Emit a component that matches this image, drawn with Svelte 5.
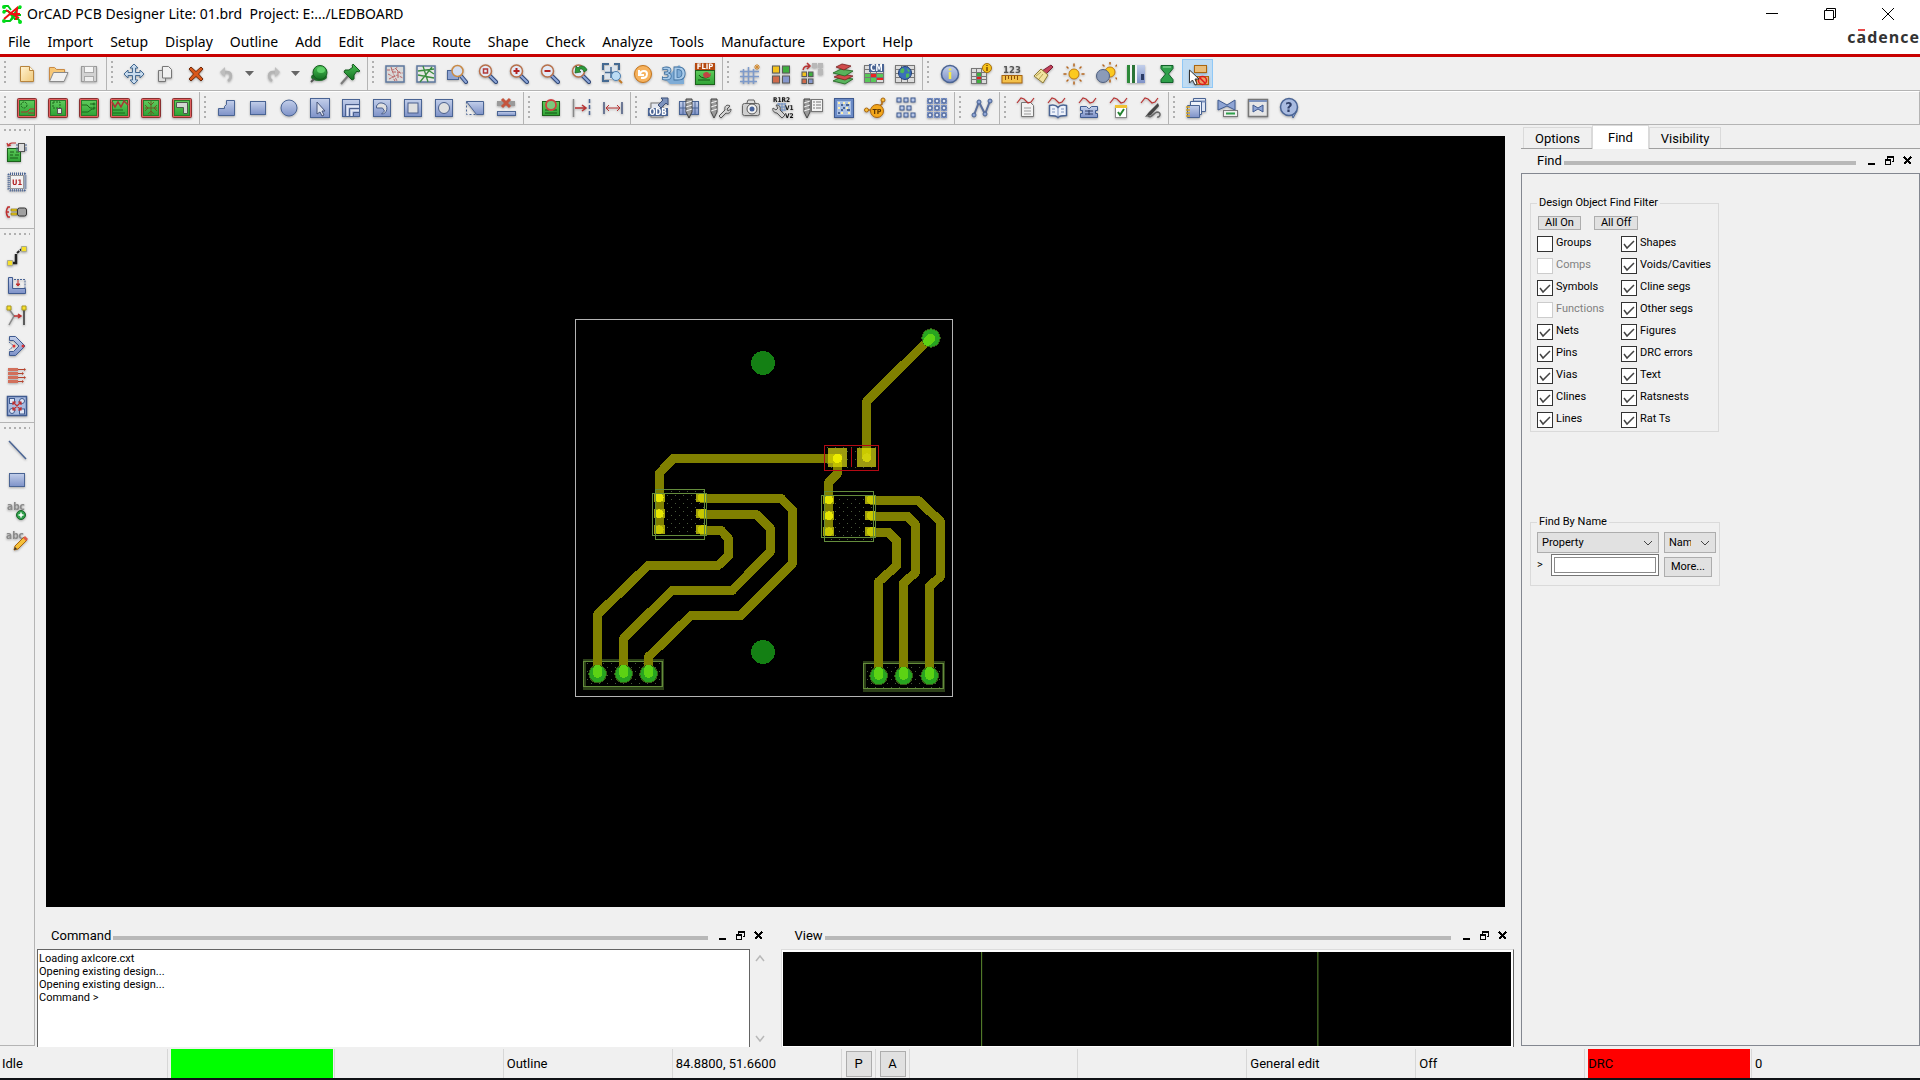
<script>
  const pcb = (inner) =>
    `<rect x="2.500" y="2.500" width="19" height="19" rx="1" fill="#e06060" stroke="#8a3030"/><rect x="4.500" y="4.500" width="15" height="15" fill="url(#gGreen)" stroke="#2a7a2a"/><g fill="none" stroke="#1c661c">${inner}</g>`;
  const blueBox = (inner) =>
    `<rect x="3.500" y="3.500" width="17" height="17" fill="url(#gBlue)" stroke="#4a6494"/><g stroke="#4a5f8c">${inner}</g>`;
  const lens = (inner) =>
    `<path d="M14 14l6 6" stroke="#2f4779" stroke-width="4" stroke-linecap="round"/><path d="M14 14l6 6" stroke="#8fa8d8" stroke-width="2" stroke-linecap="round"/><circle cx="9.500" cy="9" r="6" fill="#e3eaf6" stroke="#b8704a" stroke-width="1.500"/>${inner}`;
  const wave = '<path d="M2 7l4-5 3 1 4 4 3-1 3-4" fill="none" stroke="#b83232" stroke-width="1.200"/>';
  const drill = (x) =>
    `<path d="M${x} 3h6v13l-3 6-3-6z" fill="#9a9a9a" stroke="#444"/><path d="M${x} 7l6-2M${x} 11l6-2M${x} 15l6-2" stroke="#eee"/>`;
  const squares = (list) =>
    list.map(([x, y, c, s = 7]) => `<rect x="${x}" y="${y}" width="${s}" height="${s}" fill="${c}" stroke="#5a5a5a"/>`).join('');
  const rays =
    '<g stroke="#b5651d" stroke-width="1.500" stroke-linecap="round"><path d="M12 2v2M12 20v2M2 12h2M20 12h2M5 5l1 1M18 18l1 1M19 5l-1 1M5 19l1-1"/></g>';
  const table =
    '<rect x="2" y="3" width="20" height="18" fill="#777"/><path d="M3 4h5v3H3zM9 4h5v3H9zM15 4h6v3h-6zM3 8h5v3H3zM9 8h5v3H9zM15 8h6v3h-6zM3 12h5v3H3zM9 12h5v3H9zM15 12h6v3h-6zM3 16h5v4H3zM9 16h5v4H9zM15 16h6v4h-6z" fill="#dcdcdc"/>';

  const art = {
    fresh: '<path d="M5.500 4.500h9l4 4v11h-13z" fill="url(#gCream)" stroke="#b8843c"/><path d="M14.500 4.500v4h4" fill="#fff6dc" stroke="#b8843c"/>',
    open: '<path d="M3.500 18.500v-13h5l2 2h8v3" fill="#f6c777" stroke="#c98a45"/><path d="M3.500 19.500l4-9h14.500l-4 9z" fill="#f0f0f0" stroke="#8a8a8a"/>',
    save: '<rect x="4.500" y="4.500" width="15" height="15" fill="#d2d2d2" stroke="#9a9a9a"/><rect x="7.500" y="4.500" width="9" height="6" fill="#f6f6f6" stroke="#a8a8a8"/><rect x="7.500" y="14.500" width="9" height="5" fill="#eee" stroke="#a8a8a8"/>',
    move: '<path d="M12 2l4 4h-2.500v4.500H18V8l4 4-4 4v-2.500h-4.500V18H16l-4 4-4-4h2.500v-4.500H6V16l-4-4 4-4v2.500h4.500V6H8z" fill="#c9dcee" stroke="#456a92"/>',
    copy: '<path d="M5.500 8.500h7v11h-7z" fill="#ddd" stroke="#777"/><path d="M9.500 4.500h6l3 3v8.500h-9z" fill="#f0f0f0" stroke="#777"/>',
    drop: '<path d="M5 7l2-2 5 4.500L17 5l2 2-4.500 5 4.500 5-2 2-5-4.500L7 19l-2-2 4.500-5z" fill="#d8571a" stroke="#6e2806"/>',
    undo: '<path d="M7 10h5c5 0 5 6 1 9" fill="none" stroke="#b4b4b4" stroke-width="2.500"/><path d="M10 5v10l-5-5z" fill="#bebebe"/>',
    redo: '<path d="M17 10h-5c-5 0-5 6-1 9" fill="none" stroke="#b4b4b4" stroke-width="2.500"/><path d="M14 5v10l5-5z" fill="#bebebe"/>',
    ball: '<ellipse cx="12" cy="15" rx="8" ry="4" fill="#1f6b2a"/><circle cx="13" cy="10.500" r="7" fill="url(#gPin)" stroke="#145c1d"/><ellipse cx="14" cy="8" rx="4" ry="3" fill="#5fd069"/><path d="M4 20l3-3" stroke="#555" stroke-width="2"/>',
    pin: '<path d="M3 22l7-8" stroke="#7b7b7b" stroke-width="2"/><path d="M15 2l7 7-2 1-1-1-3 4 0 4-2 1-8-8 1-2h4l4-3-1-1z" fill="url(#gPin)" stroke="#145c1d"/>',
    ratsOn: '<rect x="3" y="4" width="18" height="16" fill="#d9d9d9" stroke="#5d789f" stroke-width="1.500"/><path d="M4 8h6l5-3M5 12l4 2 3 5M8 5l2 6 4 8M13 7l4 4h3M6 17l8-4 6 3M15 10v6M10 10h7" stroke="#b96565" fill="none" stroke-dasharray="3 1"/>',
    ratsOff: '<rect x="3" y="4" width="18" height="16" fill="#e6e6e6" stroke="#5d789f" stroke-width="1.500"/><path d="M4 9l16-2M4 13l16 3M9 4l5 16M18 5L6 20M14 8l6 4" stroke="#3a8c3f" stroke-width="1.300" fill="none"/>',
    zoomFit: '<rect x="2.500" y="8.500" width="11" height="9" fill="#8ea4d4" stroke="#4a6494"/><path d="M16 14l5 6" stroke="#2f4779" stroke-width="4" stroke-linecap="round"/><path d="M16 14l5 6" stroke="#8fa8d8" stroke-width="2" stroke-linecap="round"/><circle cx="12.500" cy="9" r="5.500" fill="#d4dff2" stroke="#c98a45" stroke-width="1.500"/>',
    zoomBox: lens('<path d="M7.500 7h4v4h-4z" fill="none" stroke="#b23a3a" stroke-width="1.500"/>'),
    zoomIn: lens('<path d="M9.500 6v6M6.500 9h6" stroke="#b22222" stroke-width="2"/>'),
    zoomOut: lens('<path d="M6.500 9h6" stroke="#b22222" stroke-width="2"/>'),
    zoomBack: lens('<path d="M18 8C16 3 11 3 9 6L7 4 6 11l6-1-2-2c2-2 4-1 5 2z" fill="#2c9a39" stroke="#145c1d" stroke-width=".700"/>'),
    center: '<path d="M3 8V2h6M14 2h5v6M3 13v6h6" fill="none" stroke="#456a92" stroke-width="2"/><rect x="5" y="4" width="12" height="13" fill="#dce4ec"/><path d="M11 5v11M5 10.500h12" stroke="#456a92" stroke-width="1.500"/><circle cx="16" cy="14" r="4.500" fill="#bcdcf4" stroke="#4d7fb0"/><path d="M19 18l3 3" stroke="#c27a28" stroke-width="2"/>',
    refresh: '<circle cx="12" cy="12" r="8.500" fill="#f6b25e" stroke="#c4741b"/><path d="M8 8v5h5M9 12c1-4 7-4 7 0s-3 4-6 4" fill="none" stroke="#fff" stroke-width="2"/>',
    threeD: '<path d="M17 3l5 5v14H8l-5-5z" fill="#7facd6"/><text x="11.500" y="18" text-anchor="middle" font-size="18" class="ic-bold" fill="#a9cbea" stroke="#3d6f9f" stroke-width=".800">3D</text>',
    flip: '<rect x="2" y="1" width="20" height="7" fill="#b5490f"/><text x="12" y="7.300" text-anchor="middle" font-size="7.500" class="ic-bold" fill="#fff">FLIP</text><rect x="2.500" y="8.500" width="19" height="14" fill="url(#gGreen)" stroke="#1c611c"/><path d="M6 13c2 4 10 4 11 0M5 18h12" stroke="#145214" fill="none"/><path d="M10 12c3-3 6-2 6 0l2-1-1 4-4 1c-2 0-3-2-3-4z" fill="#c24343"/>',
    grid: '<path d="M5.500 7v15M10.500 5v17M15.500 7v15M2 9.500h19M2 14.500h19M2 19.500h17" stroke="#7d9aca" stroke-width="1.500"/><path d="M19 2v6M16 5h6M17 3l4 4M21 3l-4 4" stroke="#d68a2c"/>',
    colors: squares([[3.5, 4, '#f2c21c'], [13.5, 4, '#3fae3f'], [3.5, 14, '#cf6a4a'], [13.5, 14, '#8597cc']]),
    swap: '<path d="M12 1h5v5h-5zM18 1h5v5h-5zM18 7h5v6h-5z" fill="#b8b8b8"/>' + squares([[2, 10, '#f2c21c', 4.5], [8.5, 10, '#3fae3f', 4.5], [2, 17, '#cf6a4a', 4.5], [8.5, 17, '#8597cc', 4.5]]) + '<path d="M3 8c1-4 3-4 6-4M7 1l3 3-3 3" fill="none" stroke="#b83232" stroke-width="1.500"/>',
    layers: '<g stroke-width=".800"><path d="M2 19l8-4 12 2-8 5z" fill="#58b35c" stroke="#1c611c"/><path d="M3 15l7-3 12 2-8 4z" fill="#cf4c4c" stroke="#7a2020"/><path d="M2 11l8-4 12 2-8 5z" fill="#58b35c" stroke="#1c611c"/><path d="M5 5l6-3 9 2-7 4z" fill="#cf4c4c" stroke="#7a2020"/></g>',
    cm: table + '<path d="M3 12h5v3H3zM3 16h5v4H3zM15 12h6v3h-6zM9 16h5v4H9z" fill="#58c858"/><path d="M9 12h5v3H9zM15 16h6v2h-6z" fill="#e22"/><rect x="7" y="2" width="15" height="8" fill="#4a6494"/><text x="14.500" y="9" text-anchor="middle" font-size="8" class="ic-bold" fill="#fff">CM</text>',
    globe: table + '<circle cx="12" cy="11" r="6.500" fill="#3b6fb8" stroke="#1f3f77"/><path d="M8 7c3-2 4 1 3 3s-3 1-4 0zM13 12c3-2 4 0 3 3l-3 1zM14 6l3 3-2 1z" fill="#4fb95a"/>',
    info: '<circle cx="12" cy="12" r="8.500" fill="url(#gBlue)" stroke="#4a6494" stroke-width="1.500"/><path d="M12 10v7M12 6.500v2" stroke="#f5ea4a" stroke-width="2.500"/>',
    tableInfo: '<path d="M2 6h16v16H2z" fill="#777"/><path d="M3 7h4v3H3zM8 7h4v3H8zM13 7h4v3h-4zM3 11h4v3H3zM13 11h4v3h-4zM3 15h4v2H3zM13 15h4v2h-4zM3 18h4v3H3zM13 18h4v3h-4z" fill="#dcdcdc"/><path d="M8 11h4v3H8zM8 18h4v3H8z" fill="#3fae3f"/><path d="M8 15h4v2H8z" fill="#d22"/><circle cx="18" cy="6" r="4.500" fill="#f6c21a" stroke="#a9700a"/><path d="M18 5v4M18 3v1" stroke="#7a4a00" stroke-width="1.500"/>',
    ruler: '<text x="12" y="10.500" text-anchor="middle" font-size="9.500" class="ic-bold" fill="#555">123</text><rect x="2" y="13.500" width="20" height="7.500" fill="#f3c14b" stroke="#a9650f"/><path d="M5.500 14v4M8.500 14v3M11.500 14v4M14.500 14v3M17.500 14v4" stroke="#8a4d0a"/>',
    brush: '<path d="M20 3l2 2-7 7-4-3z" fill="#c2405a" stroke="#7b1f34"/><path d="M10 7l7 6-5 8-9-7z" fill="#f1e3a0" stroke="#8d7a34"/><path d="M5 14l5-4M8 17l4-5" stroke="#b7a252"/>',
    sun: rays + '<circle cx="12" cy="12" r="5" fill="#fbc91f" stroke="#c07a10"/>',
    shade: '<g transform="translate(5 -2)">' + rays + '<circle cx="12" cy="12" r="5" fill="#fbc91f" stroke="#c07a10"/></g><circle cx="10" cy="14" r="6.500" fill="#8b9bb8" stroke="#4f5f80"/>',
    bars: '<rect x="3" y="3" width="18" height="18" fill="url(#gBlue)"/><path d="M3 3h3v18H3z" fill="#2e8a3a"/><path d="M6 3h2v18H6zM11 3h2v18h-2z" fill="#f4f4f4"/><path d="M8 3h3v18H8z" fill="#2b7437"/><path d="M17 12h3v6h-3z" fill="#2d3d66"/>',
    hourglass: '<path d="M6 3.500h12v3l-4.500 5.500 4.500 5.500v3H6v-3l4.500-5.500L6 6.500z" fill="#2ea04a" stroke="#12602a"/><path d="M8 5h8" stroke="#9ce0a8"/>',
    pick: '<rect x="8.500" y="3.500" width="12" height="7" fill="#e8bd7b" stroke="#a9650f"/><rect x="10.500" y="14.500" width="12" height="8" fill="#e8a06a" stroke="#a9650f"/><circle cx="16.500" cy="18.500" r="4" fill="none" stroke="#e01818" stroke-width="1.500"/><path d="M14 16l5 5" stroke="#e01818" stroke-width="1.500"/><path d="M3.500 8v13l3-3 2.500 5 2-1-2-5h4z" fill="#fff" stroke="#333"/>',

    p1: pcb('<circle cx="9" cy="9" r="3" stroke-dasharray="2 1"/><path d="M6 16h6l3-3h4" stroke="#a33"/><path d="M13 17h6" stroke="#a33"/>'),
    p2: pcb('<rect x="7" y="6" width="7" height="6" stroke-dasharray="2 1"/><rect x="11.500" y="12.500" width="4" height="5" fill="#e6e6e6" stroke="#555"/>'),
    p3: pcb('<path d="M5 9h5l3 3h2M5 16h6l4-3h2M13 8h4"/><circle cx="17" cy="8" r="1"/><circle cx="17" cy="12" r="1"/>'),
    p4: pcb('<path d="M4 6l3 5 3-5 3 5 3-6 4 4" stroke="#a33" stroke-width="1.500"/><path d="M5 14h10M5 17h12"/>'),
    p5: pcb('<path d="M12 5v14M6 12h12M9 6l3 3 3-3M9 18l3-3 3 3M6 9l3 3-3 3M18 9l-3 3 3 3" stroke="#6b5a24"/>'),
    p6: pcb('<path d="M6.500 6.500h11v11h-4v-6h-7z" fill="#d2d8d2" stroke="#4c5c4c"/>'),
    polyS: '<path d="M3.500 19.500v-7h6v-2l2-2v-4h8v15z" fill="url(#gBlue)" stroke="#4a6494"/>',
    rectS: '<rect x="4.500" y="5.500" width="15" height="13" fill="url(#gBlue)" stroke="#4a6494"/>',
    circS: '<circle cx="12" cy="12" r="8" fill="url(#gBlue)" stroke="#4a6494"/>',
    selS: '<rect x="2.500" y="2.500" width="19" height="19" fill="url(#gBlue)" stroke="#4a6494"/><path d="M9 6v12l3-2 2 4 2-1-2-4h3z" fill="#dfe4ee" stroke="#46557a"/>',
    editS: blueBox('<path d="M8.500 20v-9.500H20M12.500 20v-5.500H20" fill="none" stroke="#e3e8f2" stroke-width="2"/><path d="M6.500 20V8.500H20M10.500 20v-7.500H20M14.500 20v-3.500H20" fill="none"/>'),
    voidP: blueBox('<path d="M6.500 10a5.500 5.500 0 1 1 5 8l3-3-2-3h-6z" fill="#e0e0e0"/>'),
    voidR: blueBox('<rect x="7" y="7" width="10" height="10" fill="#e0e0e0"/>'),
    voidC: blueBox('<circle cx="12" cy="12" r="5.500" fill="#e0e0e0"/>'),
    mergeS: '<path d="M3.500 5.500h17v13h-7z" fill="url(#gBlue)" stroke="#4a6494"/><path d="M3.500 5.500v13h12" fill="none" stroke="#4a6494" stroke-dasharray="2 2"/>',
    killS: '<rect x="3" y="5" width="18" height="5" fill="#9a9a9a"/><rect x="3.500" y="15.500" width="18" height="4" fill="url(#gBlue)" stroke="#4a6494"/><path d="M8 3l8 8M16 3l-8 8" stroke="#c4543c" stroke-width="3"/>',
    board: '<rect x="3.500" y="5.500" width="17" height="14" fill="url(#gGreen)" stroke="#1c611c"/><path d="M6 17h12M6 14h4M14 14h4" stroke="#145214"/><circle cx="12" cy="9" r="5" fill="#7cc87c" stroke="#d04040" stroke-width="1.800"/>',
    dimA: '<path d="M3.500 3v18" stroke="#888" stroke-width="1.500"/><path d="M19.500 3v18" stroke="#4a6494" stroke-width="1.500" stroke-dasharray="4 2"/><path d="M5 12h10M12 9l4 3-4 3" stroke="#b83232" stroke-width="1.500" fill="none"/>',
    dimB: '<path d="M3 6v12M21 6v12" stroke="#4a5a80" stroke-width="1.500"/><path d="M5 12h14M8 9l-3 3 3 3M16 9l3 3-3 3" stroke="#b83232" fill="none"/>',
    odb: '<rect x="5" y="7" width="12" height="14" fill="#e4e8f0" stroke="#777"/><path d="M12 9l5-5-2-2h7v7l-2-2-5 5z" fill="#7c92bd" stroke="#3f527a"/><rect x="2" y="12" width="20" height="8" fill="#4a6494"/><text x="12" y="18.800" text-anchor="middle" font-size="8" class="ic-bold" fill="#fff">ODB</text>',
    drillT: '<rect x="2.500" y="5.500" width="19" height="13" fill="url(#gBlue)" stroke="#4a6494"/><path d="M6 5v14M18 5v14M2 12h20" stroke="#4a6494"/>' + drill(9),
    drillW: drill(3) + '<path d="M11 20l6-6c-1-4 2-6 5-4l-3 3 1 2 3-2c0 4-3 5-5 4l-5 5z" fill="#d2d2d2" stroke="#555"/>',
    camera: '<rect x="3.500" y="7.500" width="17" height="12" rx="2" fill="#cfcfcf" stroke="#666"/><path d="M8 7l1-3h6l1 3" fill="#ddd" stroke="#666"/><circle cx="13" cy="13" r="5" fill="#f1f1f1" stroke="#555"/><circle cx="13" cy="13" r="2.500" fill="#48639c"/>',
    refdes: '<text x="3" y="6" font-size="6.500" class="ic-bold" fill="#111">R1R2</text><path d="M7 8h9M7 11h8M7 14h8M9 7v10M12 7v10M15 7v8" stroke="#6d8fc4"/><path d="M12 22l-5-5c-3 0-5-3-4-5l3 2 2-2-2-3c3 0 5 2 4 5l5 5z" fill="#d2d2d2" stroke="#555"/><text x="15" y="14" font-size="6.500" class="ic-bold" fill="#111">V1</text><text x="15" y="22" font-size="6.500" class="ic-bold" fill="#111">V2</text>',
    drillL: drill(3) + '<rect x="10.500" y="3.500" width="11" height="12" fill="#f2f2f2" stroke="#777"/><path d="M12 6h2M15 6h5M12 9h2M15 9h5M12 12h2M15 12h5" stroke="#777"/>',
    chip: '<rect x="2.500" y="2.500" width="19" height="19" fill="#6a8ac6" stroke="#3f5a90"/><rect x="5" y="5" width="14" height="14" fill="#a9bfe4"/><path d="M6 7h2M11 7h2M16 7h2M6 12h2M14 12h2M9 17h2M16 17h2" stroke="#fff0b0" stroke-width="2"/><path d="M9 9h2M14 9h3M9 14h2M15 14h3M6 17h2M11 12h2" stroke="#4a6494" stroke-width="2"/>',
    testpt: '<path d="M3 14h8l8-6V4" stroke="#b06a10" stroke-width="1.500" fill="none"/><circle cx="3.500" cy="14" r="2" fill="#f8bf3c" stroke="#a9650f"/><circle cx="20" cy="4" r="2" fill="#f8bf3c" stroke="#a9650f"/><circle cx="14" cy="15" r="6.500" fill="#f3a71c" stroke="#a9650f"/><text x="14" y="17.500" text-anchor="middle" font-size="7" class="ic-bold" fill="#5b3500">TP</text>',
    pinsA: squares([[3, 2, '#b9c8e8', 4], [10, 2, '#b9c8e8', 4], [17, 2, '#b9c8e8', 4], [6, 10, '#b9c8e8', 4], [13, 10, '#b9c8e8', 4], [3, 17, '#b9c8e8', 4], [10, 17, '#b9c8e8', 4], [17, 17, '#b9c8e8', 4]]).replaceAll('#5a5a5a', '#3f5a90'),
    pinsB: [5, 12, 19].flatMap((x) => [5, 12, 19].map((y) => `<rect x="${x - 3}" y="${y - 3}" width="6" height="6" fill="#7d94c6"/><circle cx="${x}" cy="${y}" r="2" fill="#dfe6f5" stroke="#3f5a90"/>`)).join(''),
    netN: '<path d="M4 19L9 6l6 12 5-13" fill="none" stroke="#5b6f9c" stroke-width="2"/><g fill="#8ea4d4" stroke="#4a6494"><circle cx="4" cy="19" r="2"/><circle cx="9" cy="6" r="2"/><circle cx="15" cy="18" r="2"/><circle cx="20" cy="5" r="2"/></g>',
    wDoc: '<path d="M6.500 6.500h9l3 3v11h-12z" fill="#f2f2f2" stroke="#777"/><path d="M9 12h7M9 15h7M9 18h7" stroke="#999"/>' + wave,
    wBook: '<path d="M3.500 9.500c4-1 7 0 8.500 2 1.500-2 4.500-3 8.500-2v10c-4 0-7 0-8.500 2-1.500-2-4.500-2-8.500-2z" fill="#eef2fa" stroke="#4a6494" stroke-width="1.500"/><path d="M12 12v9M6 13h3M6 16h3M15 13h3M15 16h3" stroke="#7c92bd"/>' + wave,
    wBox: '<path d="M3.500 10.500h6l2 2h1l2-2h6v4h-2v3h2v4h-17v-4h2v-3h-2z" fill="url(#gBlue)" stroke="#3f5a90"/><path d="M8 15h8M8 18h8M12 14v5" stroke="#2d3d66"/>' + wave,
    wCheck: '<rect x="7.500" y="9.500" width="11" height="12" fill="#fff" stroke="#888"/><path d="M7 9h12v3H7z" fill="#f1c232"/><path d="M10 16l2 3 4-6" stroke="#23832f" stroke-width="2" fill="none"/>' + wave,
    wProbe: wave + '<path d="M19 7l-9 9-4 5 6-2 8-9z" fill="#444"/><path d="M8 19c4 5 6-2 10-3 5 0 3 6 0 5" fill="none" stroke="#666" stroke-width="1.500"/>',
    books: '<path d="M9.500 2.500h12v13h-12z" fill="#dde5f4" stroke="#4a6494"/><path d="M9.500 5.500h12" stroke="#7c92bd" stroke-width="2"/><path d="M6.500 5.500h11v13h-11z" fill="#eef2fa" stroke="#4a6494"/><path d="M3.500 9.500h12v12h-12z" fill="url(#gBlue)" stroke="#4a6494"/><path d="M2 11h4M2 14h4M2 17h4M2 20h4" stroke="#d9a520" stroke-width="1.500"/>',
    bow: '<path d="M3 4l9 5 8-5v10l-8-4-9 4z" fill="#8ea4d4" stroke="#3f5a90"/><rect x="8.500" y="14.500" width="14" height="6" fill="#eee" stroke="#777"/><path d="M11 17.500h9" stroke="#2ea04a" stroke-width="2"/>',
    win: '<rect x="2.500" y="3.500" width="19" height="17" fill="#e6e6e6" stroke="#777" stroke-width="1.500"/><path d="M3 5h18" stroke="#7c92bd" stroke-width="2"/><path d="M7 9l5 3 5-3v7l-5-3-5 3z" fill="#8ea4d4" stroke="#3f5a90"/>',
    help: '<path d="M20 15l-4 7-1-4z" fill="#8ea4d4" stroke="#4a6494"/><circle cx="12" cy="11" r="8.500" fill="#a9bbe0" stroke="#4a6494" stroke-width="1.500"/><text x="12" y="16" text-anchor="middle" font-size="14" class="ic-bold" fill="#2d3d66">?</text>',

    place: '<rect x="2.500" y="8.500" width="13" height="13" fill="url(#gGreen)" stroke="#1c611c"/><path d="M5 12h4M11 12h3M5 15h3M10 15h4M5 18h8" stroke="#1a5c1a"/><rect x="13.500" y="3.500" width="6" height="8" fill="#ddd" stroke="#555"/><path d="M11 5h2M11 8h2M11 10h2M20 5h2M20 8h2M20 10h2" stroke="#4a6494"/><path d="M11 3H7C5 3 4 4 3 6M2 3l1 3 3-1" stroke="#c03030" stroke-width="1.200" fill="none"/>',
    unit: '<rect x="4" y="4" width="16" height="16" rx="1" fill="#e8e8e8" stroke="#4a6494" stroke-width="3" stroke-dasharray="1 1"/><rect x="5.500" y="5.500" width="13" height="13" fill="#f2f2f2" stroke="#999"/><text x="12" y="15" text-anchor="middle" font-size="7.500" class="ic-bold" fill="#b22222">U1</text>',
    plug: '<path d="M5 7H3c-2 3-2 7 0 10h2M2 12h2" stroke="#c03030" stroke-width="1.500" fill="none"/><path d="M6 9h6v2H6zM6 13h6v2H6z" fill="#f1d21c" stroke="#8a7410" stroke-width=".700"/><rect x="12.500" y="8" width="9" height="8" rx="2" fill="#a0a0a0" stroke="#333"/>',
    route: '<path d="M6 19h5v-9" fill="none" stroke="#222" stroke-width="2.500"/><path d="M12 9l6-5" stroke="#222" stroke-width="2" stroke-dasharray="3 1"/><path d="M2.500 16.500h5v5h-5zM16.500 2.500h5v5h-5z" fill="#f6df2a" stroke="#a9a98a"/>',
    slide: '<path d="M3.500 3.500h4v11h13v5h-17z" fill="url(#gBlue)" stroke="#3f5a90"/><path d="M9 5.500h11V14" fill="none" stroke="#4a6494" stroke-dasharray="2 1"/><path d="M13 6v4M11 10h4l-2 2z" fill="#c03030" stroke="#c03030"/>',
    vertex: '<path d="M4 5l5 7-5 9" fill="none" stroke="#888" stroke-width="1.500"/><path d="M19 4v17" stroke="#333" stroke-width="1.500"/><path d="M2 2h4v4H2zM17 2h4v4h-4z" fill="#f6df2a" stroke="#a99820"/><path d="M9 12h7M13 10l3 2-3 2" stroke="#c03030" stroke-width="1.500" fill="none"/>',
    fanout: '<path d="M4.500 2.500h6l9.500 9.500-9.500 9.500h-6v-4h4l5.500-5.500-5.500-5.500h-4z" fill="url(#gBlue)" stroke="#3f5a90"/><path d="M4 8l5 4-5 4" fill="none" stroke="#4a6494" stroke-dasharray="2 1"/><circle cx="9" cy="12" r="1.500" fill="#d33"/><circle cx="18" cy="12" r="1.500" fill="#d33"/>',
    bus: '<path d="M3 4h10v3H3zM3 8h10v3H3zM3 12h10v3H3zM3 16h10v3H3z" fill="#d2705c"/><path d="M13 5.500h7M13 9.500h5M13 13.500h7M13 17.500h5" stroke="#b5432d"/><path d="M19 4v3l2-1.500zM17 8v3l2-1.500zM19 12v3l2-1.500zM17 16v3l2-1.500z" fill="#b5432d"/>',
    spread: '<rect x="2.500" y="2.500" width="19" height="19" fill="#a9bbe0" stroke="#3f5a90" stroke-width="1.500"/><g fill="#dfe6f5" stroke="#3f5a90"><circle cx="17" cy="7" r="2.500"/><rect x="4.500" y="4.500" width="5" height="5"/><rect x="14.500" y="15" width="5" height="5"/><circle cx="7" cy="17" r="2.500"/></g><path d="M8 8l8 8M16 8l-8 8M8 11V8h3M13 8h3v3M8 13v3h3M13 16h3v-3" stroke="#c03030" stroke-width="1.200" fill="none"/>',
    line: '<path d="M4 3l17 18" stroke="#4a6494" stroke-width="1.500"/>',
    text: '<text x="11" y="12" text-anchor="middle" font-size="10" class="ic-bold" fill="#8a8a8a">abc</text><circle cx="16" cy="17" r="4.500" fill="#2ea04a" stroke="#176327"/><path d="M16 14.500v5M13.500 17h5" stroke="#fff" stroke-width="1.500"/>',
    textEdit: '<text x="10" y="11" text-anchor="middle" font-size="10" class="ic-bold" fill="#8a8a8a">abc</text><path d="M9 22l1-4 9-9 3 3-9 9z" fill="#f5c038" stroke="#a9650f"/><path d="M9 22l1-3 2 2z" fill="#333"/><path d="M18 10l2-2 3 3-2 2z" fill="#e05a4a"/>'
  };

  const row1 = [
    [['fresh', 'New'], ['open', 'Open'], ['save', 'Save']],
    [['move', 'Move'], ['copy', 'Copy'], ['drop', 'Delete'], ['undo', 'Undo'], ['caret', 'Undo list'], ['redo', 'Redo'], ['caret', 'Redo list'], ['ball', 'Fix'], ['pin', 'Unfix']],
    [['ratsOn', 'Unrats all'], ['ratsOff', 'Rats all'], ['zoomFit', 'Zoom fit'], ['zoomBox', 'Zoom by points'], ['zoomIn', 'Zoom in'], ['zoomOut', 'Zoom out'], ['zoomBack', 'Zoom previous'], ['center', 'Zoom selection'], ['refresh', 'Redraw'], ['threeD', '3D view'], ['flip', 'Flip board']],
    [['grid', 'Grid toggle'], ['colors', 'Colors'], ['swap', 'Swap colors'], ['layers', 'Cross section'], ['cm', 'Constraint manager'], ['globe', 'Global constraints']],
    [['info', 'Show element'], ['tableInfo', 'Show properties'], ['ruler', 'Measure'], ['brush', 'Highlight'], ['sun', 'Shadow off'], ['shade', 'Shadow on'], ['bars', 'Reports'], ['hourglass', 'Waive DRC'], ['pick', 'Selection filter']]
  ];
  const row2 = [
    [['p1', 'Etch edit'], ['p2', 'Placement edit'], ['p3', 'Route edit'], ['p4', 'Signal integrity'], ['p5', 'General mode'], ['p6', 'Shape mode']],
    [['polyS', 'Add polygon'], ['rectS', 'Add rectangle'], ['circS', 'Add circle'], ['selS', 'Select shape'], ['editS', 'Edit boundary'], ['voidP', 'Void polygon'], ['voidR', 'Void rectangle'], ['voidC', 'Void circle'], ['mergeS', 'Merge shapes'], ['killS', 'Delete islands']],
    [['board', 'Board view'], ['dimA', 'Align spacing'], ['dimB', 'Dimension']],
    [['odb', 'Export ODB'], ['drillT', 'Drill table'], ['drillW', 'Drill setup'], ['camera', 'Artwork'], ['refdes', 'Rename refdes'], ['drillL', 'Drill legend'], ['chip', 'Thieving'], ['testpt', 'Test points'], ['pinsA', 'Pin array'], ['pinsB', 'Ball array']],
    [['netN', 'Net topology']],
    [['wDoc', 'Signal report'], ['wBook', 'Signal library'], ['wBox', 'Signal model'], ['wCheck', 'Signal audit'], ['wProbe', 'Signal probe']],
    [['books', 'Libraries'], ['bow', 'Run progress'], ['win', 'New window'], ['help', 'Help']]
  ];
  const dock = [
    [['place', 'Place manually'], ['unit', 'Place part'], ['plug', 'Connect']],
    [['route', 'Add connect'], ['slide', 'Slide'], ['vertex', 'Custom smooth'], ['fanout', 'Vertex'], ['bus', 'Bus route'], ['spread', 'Spread']],
    [['line', 'Add line'], ['rectS', 'Add rectangle'], ['text', 'Add text'], ['textEdit', 'Edit text']]
  ];

  const menus = ['File', 'Import', 'Setup', 'Display', 'Outline', 'Add', 'Edit', 'Place', 'Route', 'Shape', 'Check', 'Analyze', 'Tools', 'Manufacture', 'Export', 'Help'];

  const filters = [
    ['Groups', ''], ['Shapes', 'on'], ['Comps', 'off'], ['Voids/Cavities', 'on'], ['Symbols', 'on'], ['Cline segs', 'on'],
    ['Functions', 'off'], ['Other segs', 'on'], ['Nets', 'on'], ['Figures', 'on'], ['Pins', 'on'], ['DRC errors', 'on'],
    ['Vias', 'on'], ['Text', 'on'], ['Clines', 'on'], ['Ratsnests', 'on'], ['Lines', 'on'], ['Rat Ts', 'on']
  ];

  const traces = [
    'M268 660V490L309 446H802', 'M802 446V491L776 517V660', 'M890 440V274L1082 84',
    'M396 565H633L667 600V760L513 916H364L236 1040V1085', 'M396 613H558L601 655V725L487 841H307L161 985V1085',
    'M396 661H453L475 685V738L445 766H235L83 913V1085', 'M905 571H1044L1111 634V800L1079 828V1090',
    'M905 619H1012L1036 643V788L1000 820V1090', 'M905 667H955L979 690V768L925 816V1090'
  ];
  const chips = [{ x: 268, r: 396, y: 563 }, { x: 776, r: 903, y: 569 }];
  const headers = [{ x: 40, y: 1046, w: 240, pins: [83, 161, 236] }, { x: 880, y: 1052, w: 243, pins: [926, 1001, 1079] }];
</script>

{#snippet tools(groups)}
  {#each groups as group}
    <div class="group" role="group">
      {#each group as [name, label]}
        {#if name === 'caret'}
          <button class="tool caret" aria-label={label}><svg viewBox="0 0 9 5"><path d="M0 0h9L4.500 5z" fill="#666" /></svg></button>
        {:else}
          <button class="tool" class:active={name === 'pick'} aria-label={label}>
            <svg class="icon" viewBox="0 0 24 24">{@html art[name]}</svg>
          </button>
        {/if}
      {/each}
    </div>
  {/each}
{/snippet}

{#snippet paneHead(title)}
  <header class="pane-head">
    <h2>{title}</h2>
    <span class="rail"></span>
    <button aria-label="Minimize {title}"><svg viewBox="0 0 9 9"><path d="M1 7h7v2H1z" /></svg></button>
    <button aria-label="Float {title}"><svg viewBox="0 0 9 9"><path d="M2 0h7v6H7V5h1V2H3v1H2zM0 3h6v6H0zM1 5v3h4V5z" fill-rule="evenodd" /></svg></button>
    <button aria-label="Close {title}"><svg viewBox="0 0 9 9"><path d="M1 1l7 7M8 1L1 8" fill="none" stroke="#000" stroke-width="1.500" /></svg></button>
  </header>
{/snippet}

<svg class="defs" aria-hidden="true">
  <defs>
    <linearGradient id="gBlue" x1="0" y1="0" x2="0" y2="1"><stop offset="0" stop-color="#c3cfea" /><stop offset="1" stop-color="#7e92c8" /></linearGradient>
    <linearGradient id="gGreen" x1="0" y1="0" x2="0" y2="1"><stop offset="0" stop-color="#5fcb5c" /><stop offset="1" stop-color="#2fa335" /></linearGradient>
    <linearGradient id="gCream" x1="0" y1="0" x2="1" y2="1"><stop offset="0" stop-color="#fff3d2" /><stop offset="1" stop-color="#f0c878" /></linearGradient>
    <linearGradient id="gPin" x1="0" y1="0" x2="0" y2="1"><stop offset="0" stop-color="#4cc257" /><stop offset="1" stop-color="#147022" /></linearGradient>
  </defs>
</svg>

<div class="app">
  <div class="top">
    <div class="titlebar">
      <svg class="logo" viewBox="0 0 20 20">
        <path d="M2 2h4l3 4M1 7h5l4 5h5M2 17h6l6-6h5M8 17l8-13h3M12 15h4l3 3" fill="none" stroke="#00c814" stroke-width="1.800" />
        <g fill="#00e01a"><circle cx="2" cy="3" r="2" /><circle cx="2" cy="8" r="1.800" /><circle cx="2" cy="17" r="2" /><circle cx="18" cy="3" r="1.800" /><circle cx="18" cy="18" r="2" /></g>
        <path d="M2 15L15 4l-1 12M4 6l13 8M8 10h10" fill="none" stroke="#f01010" stroke-width="2" />
      </svg>
      <h1>OrCAD PCB Designer Lite: 01.brd&nbsp; Project: E:.../LEDBOARD</h1>
      <div class="winctl">
        <button aria-label="Minimize"><svg viewBox="0 0 14 14"><path d="M1 6.500h12" /></svg></button>
        <button aria-label="Restore"><svg viewBox="0 0 14 14"><path d="M1.500 3.500h9v9h-9zM3.500 3.500v-2h9v9h-2" /></svg></button>
        <button aria-label="Close"><svg viewBox="0 0 14 14"><path d="M1 1l12 12M13 1L1 13" /></svg></button>
      </div>
    </div>
    <div class="menurow">
      <nav class="menus">
        {#each menus as menu}<button>{menu}</button>{/each}
      </nav>
      <span class="brand">c<span class="macron">a</span>dence</span>
    </div>
  </div>

  <div class="toolbar">{@render tools(row1)}</div>
  <div class="toolbar second">{@render tools(row2)}</div>

  <div class="work">
    <div class="dock">{@render tools(dock)}</div>

    <main>
      <div class="canvas">
        <svg viewBox="0 0 1459 771" role="img" aria-label="Board layout">
          <defs>
            <pattern id="dots" width="24" height="24" patternUnits="userSpaceOnUse"><path d="M2 2h3v3H2zM14 14h3v3h-3z" fill="#4a5a3c" /></pattern>
          </defs>
          <g transform="translate(524 174) scale(.33333)" fill="none">
            <rect x="16" y="28" width="1131" height="1131" stroke="#b4b4b4" stroke-width="3" />
            <g fill="#148014"><circle cx="579" cy="159" r="36" /><circle cx="579" cy="1026" r="36" /></g>
            {#each headers as h}
              <rect x={h.x + 3} y={h.y + 4} width={h.w - 6} height="86" fill="url(#dots)" stroke="#2c4018" stroke-width="8" />
              <rect x={h.x} y={h.y + 8} width={h.w - 2} height="76" stroke="#648c3c" stroke-width="3" />
            {/each}
            {#each chips as c}
              <rect x={c.x - 11} y={c.y - 25} width="147" height="150" fill="url(#dots)" />
            {/each}
            <rect x="764" y="407" width="162" height="75" fill="url(#dots)" />
            <g stroke="#808000" stroke-width="27" stroke-linecap="round" stroke-linejoin="round">
              {#each traces as d}<path {d} />{/each}
            </g>
            {#each chips as c}
              <g fill="#a3a30a">
                {#each [0, 48, 96] as dy}
                  <rect x={c.x - 16} y={c.y + dy - 14} width="33" height="27" />
                  <rect x={c.r - 18} y={c.y + dy - 14} width="33" height="27" />
                {/each}
              </g>
              {#each [0, 48, 96] as dy}
                <circle cx={c.x} cy={c.y + dy} r="13" fill={dy === 96 ? '#c8c800' : '#e6e600'} />
                <path d="M{c.r} {c.y + dy}h14" stroke="#c8c800" stroke-width="26" />
                <circle cx={c.r} cy={c.y + dy} r="13" fill="#c8c800" />
              {/each}
              <g stroke="#648c3c" stroke-width="3">
                <rect x={c.x - 11} y={c.y - 25} width="147" height="150" />
                <rect x={c.x - 20} y={c.y - 13} width="162" height="126" />
              </g>
            {/each}
            <path d="M774 413h57v58h-57zM861 413h57v58h-57z" fill="#9c9c10" />
            <path d="M890 440v-27M890 440v3" stroke="#caca00" stroke-width="27" />
            <circle cx="890" cy="443" r="13" fill="#d2d20a" />
            <path d="M774 446h28v25" stroke="#c0c000" stroke-width="27" />
            <circle cx="802" cy="445" r="14" fill="#ecec00" />
            <rect x="764" y="407" width="162" height="75" stroke="#b40a14" stroke-width="3" />
            <path d="M844 414v57" stroke="#b40a14" stroke-width="3" />
            {#each headers as h}
              {#each h.pins as x}
                <circle cx={x} cy={h.y + 46} r="28" fill="#345c14" />
                <circle cx={x} cy={h.y + 46} r="25" fill="#28a420" />
                <path d="M{x} {h.y + 32}v12" stroke="#5cd214" stroke-width="27" stroke-linecap="round" />
              {/each}
            {/each}
            <circle cx="1083" cy="84" r="29" fill="#345c14" />
            <circle cx="1083" cy="84" r="26" fill="#28a420" />
            <path d="M1082 85l-9 9" stroke="#5cd214" stroke-width="27" stroke-linecap="round" />
          </g>
        </svg>
      </div>

      <div class="panes">
        <section class="pane">
          {@render paneHead('Command')}
          <div class="console">
            <div class="log">
              <p>Loading axlcore.cxt</p>
              <p>Opening existing design...</p>
              <p>Opening existing design...</p>
              <p>Command &gt;</p>
            </div>
            <div class="scroll">
              <svg viewBox="0 0 10 10"><path d="M1 7l4-5 4 5" /></svg>
              <svg viewBox="0 0 10 10"><path d="M1 3l4 5 4-5" /></svg>
            </div>
          </div>
        </section>
        <section class="pane">
          {@render paneHead('View')}
          <div class="overview">
            <svg viewBox="0 0 728 94" preserveAspectRatio="none" role="img" aria-label="Board overview">
              <path d="M198.500 0v94M534.500 0v94" stroke="#5c8a30" />
            </svg>
          </div>
        </section>
      </div>
    </main>

    <aside>
      <div class="tabs" role="tablist">
        <button role="tab" aria-selected="false">Options</button>
        <button role="tab" aria-selected="true">Find</button>
        <button role="tab" aria-selected="false">Visibility</button>
      </div>
      {@render paneHead('Find')}
      <div class="find">
        <fieldset>
          <legend>Design Object Find Filter</legend>
          <div class="all"><button>All On</button><button>All Off</button></div>
          <div class="filters">
            {#each filters as [label, state]}
              <label class:disabled={state === 'off'}>
                <input type="checkbox" checked={state === 'on'} disabled={state === 'off'} /><span>{label}</span>
              </label>
            {/each}
          </div>
        </fieldset>
        <fieldset class="byname">
          <legend>Find By Name</legend>
          <div class="pair">
            <select aria-label="Object type"><option>Property</option></select>
            <select class="short" aria-label="Match by"><option>Name</option></select>
          </div>
          <div class="pair query">
            <label for="query">&gt;</label>
            <input id="query" type="text" />
            <button>More...</button>
          </div>
        </fieldset>
      </div>
    </aside>
  </div>

  <footer>
    <div class="cell">Idle</div>
    <div class="cell fill go"><span></span></div>
    <div class="cell"></div>
    <div class="cell">Outline</div>
    <div class="cell">84.8800, 51.6600</div>
    <div class="cell key"><button>P</button></div>
    <div class="cell key"><button>A</button></div>
    <div class="cell"></div>
    <div class="cell"></div>
    <div class="cell">General edit</div>
    <div class="cell">Off</div>
    <div class="cell fill stop"><span>DRC</span></div>
    <div class="cell">0</div>
  </footer>
</div>

<style>
  :global(body) { margin: 0; background: #f0f0f0; }
  * { box-sizing: border-box; }
  button, input, select { font: inherit; color: inherit; border-radius: 0; }
  button { padding: 0; border: 0; background: none; }
  h1, h2, p { margin: 0; font-weight: 400; font-size: inherit; }
  .defs { position: absolute; width: 0; height: 0; }
  .app {
    display: flex; flex-direction: column; height: 100vh; overflow: hidden;
    background: #f0f0f0; color: #000; font: 13px/16px Roboto, "Open Sans", sans-serif;
  }
  .top { background: #fff; border-bottom: 3px solid #c80000; font: 14px/20px "Noto Sans", "Open Sans", sans-serif; }
  .titlebar { display: flex; align-items: center; height: 28px; padding: 0 3px 0 2px; }
  .logo { width: 20px; height: 20px; margin-right: 5px; }
  .winctl { display: flex; margin-left: auto; }
  .winctl button { display: grid; place-items: center; width: 58px; height: 28px; }
  .winctl svg { width: 14px; height: 14px; fill: none; stroke: #000; }
  .menurow { display: flex; justify-content: space-between; align-items: center; height: 26px; }
  .menus { display: flex; gap: 1px; }
  .menus button { padding: 1px 8px 0; }
  .brand { margin-top: -8px; font: 700 16px/18px "Open Sans", sans-serif; color: #333; letter-spacing: 1px; }
  .macron { position: relative; }
  .macron::before { content: ""; position: absolute; left: 1px; top: 3px; width: 7px; height: 2px; background: #e84848; }

  .toolbar { display: flex; height: 34px; border-bottom: 1px solid #b4b4b4; }
  .toolbar.second { border-right: 1px solid #b4b4b4; border-top: 1px solid #fff; }
  .group { position: relative; display: flex; align-items: center; padding: 0 2px 0 11px; border-right: 1px solid #b4b4b4; }
  .group:last-child { border-right: 0; }
  .group::before {
    content: ""; position: absolute; left: 4px; top: 4px; bottom: 4px; width: 2px;
    background: repeating-linear-gradient(#b0b0b0 0 2px, transparent 2px 5px);
  }
  .tool { display: grid; place-items: center; width: 31px; height: 29px; }
  .tool.caret { width: 15px; }
  .caret svg { width: 9px; height: 5px; }
  .tool.active { background: #c0dcf3; box-shadow: inset 0 0 0 1px #90c8f6; }
  .icon { width: 24px; height: 24px; filter: drop-shadow(0 1px 1px rgb(0 0 0 / 30%)); }
  .icon :global(.ic-bold) { font-family: "DejaVu Sans Condensed", sans-serif; font-weight: 700; }

  .work { display: flex; flex: 1; min-height: 0; }
  .dock { width: 35px; border-right: 1px solid #b4b4b4; border-bottom: 1px solid #b4b4b4; }
  .dock .group { flex-direction: column; padding: 12px 0 1px; border-right: 0; border-bottom: 1px solid #b4b4b4; }
  .dock .group:last-child { border-bottom: 0; }
  .dock .group::before {
    left: 4px; right: 4px; top: 4px; bottom: auto; width: auto; height: 2px;
    background: repeating-linear-gradient(90deg, #b0b0b0 0 2px, transparent 2px 5px);
  }
  .dock .tool { width: 34px; height: 30px; }

  main { display: flex; flex: 1; flex-direction: column; min-width: 0; }
  .canvas { flex: 1; min-height: 0; margin: 11px 16px 20px 11px; background: #000; }
  .canvas svg { display: block; width: 100%; height: 100%; shape-rendering: crispEdges; }
  .panes { display: grid; grid-template-columns: 1fr 1fr; gap: 10px; height: 119px; padding: 0 7px 0 2px; }
  .pane { display: flex; flex-direction: column; min-width: 0; }
  .pane-head { display: flex; align-items: center; height: 22px; padding: 0 3px 5px 14px; }
  .rail { flex: 1; height: 4px; margin: 4px 6px 0 2px; background: #b8b8b8; }
  .pane-head button { display: grid; place-items: center; width: 18px; height: 14px; }
  .pane-head button svg { width: 9px; height: 9px; shape-rendering: crispEdges; }
  .console { display: flex; flex: 1; }
  .log { flex: 1; padding: 2px 1px; background: #fff; border: solid #646464; border-width: 1px 1px 0; font: 11px/13px Roboto, "Liberation Sans", sans-serif; }
  .scroll { display: flex; flex-direction: column; justify-content: space-between; align-items: center; width: 21px; padding: 5px 0 4px; }
  .scroll svg { width: 10px; height: 10px; fill: none; stroke: #b8b8b8; stroke-width: 1.500; }
  .overview { flex: 1; padding: 2px 2px 1px 1px; background: #fff; border: 1px solid #dcdcdc; border-right: 1px solid #646464; border-bottom: 0; min-height: 0; }
  .overview svg { display: block; width: 100%; height: 100%; background: #000; }

  aside { display: flex; flex-direction: column; width: 399px; }
  .tabs { display: flex; align-items: flex-end; height: 24px; padding-left: 2px; border-bottom: 1px solid #a0a0a0; }
  .tabs button { height: 21px; padding: 1px 11px 0; border: 1px solid #dadada; border-bottom: 0; }
  .tabs button[aria-selected="true"] { height: 24px; margin-bottom: -1px; padding: 0 15px; background: #fff; }
  aside .pane-head { height: 24px; padding: 0 4px 1px 16px; }
  .find { flex: 1; padding: 22px 0 0 8px; border: 1px solid #838790; font: 11px/14px Roboto, "Liberation Sans", sans-serif; }
  fieldset { width: 189px; margin: 0; padding: 6px 0 0 6px; border: 1px solid #dadada; }
  legend { padding: 0 2px; line-height: 14px; }
  .all { display: flex; gap: 13px; margin-bottom: 3px; padding-left: 1px; }
  .all button { height: 14px; padding: 0 6px; line-height: 12px; background: #e1e1e1; border: 1px solid #adadad; }
  .filters { display: grid; grid-template-columns: 84px 1fr; }
  .filters label { display: flex; align-items: center; gap: 3px; height: 22px; white-space: nowrap; }
  .filters span { padding-bottom: 2px; }
  .filters .disabled { color: #808080; }
  .filters input {
    appearance: none; flex: none; width: 16px; height: 16px; margin: 0; background: #fff; border: 1px solid #333;
  }
  .filters input:checked {
    background: #fff url('data:image/svg+xml,<svg xmlns="http://www.w3.org/2000/svg" viewBox="0 0 14 14"><path d="M2 7l3 4 7-7" fill="none" stroke="%23444" stroke-width="1.500"/></svg>');
  }
  .filters input:disabled { border-color: #ccc; }
  .byname { margin-top: 83px; padding: 3px 3px 8px 6px; }
  .pair { display: flex; gap: 5px; }
  select {
    appearance: none; width: 122px; height: 21px; padding: 0 20px 0 4px; border: 1px solid #adadad; overflow: hidden;
    background: #e1e1e1 url('data:image/svg+xml,<svg xmlns="http://www.w3.org/2000/svg" viewBox="0 0 10 6"><path d="M1 1l4 4 4-4" fill="none" stroke="%23444"/></svg>') no-repeat right 5px center / 10px 6px;
  }
  select.short { width: 52px; padding-right: 24px; }
  .query { align-items: flex-start; margin-top: 1px; }
  .query label { width: 9px; line-height: 22px; }
  .query input { width: 108px; height: 22px; border: 1px solid #767676; outline: 1px solid #fff; outline-offset: -2px; box-shadow: inset 0 0 0 2px #fff, inset 0 0 0 3px #8a8a8a; background: #fff; }
  .query button { width: 48px; height: 20px; margin-top: 3px; background: #e1e1e1; border: 1px solid #adadad; }

  footer { display: flex; height: 34px; border-bottom: 2px solid #101216; }
  .cell { flex: 1 1 0; min-width: 0; margin-top: 3px; padding: 0 3px; border-right: 1px solid #d7d7d7; line-height: 30px; white-space: nowrap; }
  .cell:first-child { padding-left: 2px; }
  .cell:last-child { border-right: 0; }
  .fill span { display: block; height: 29px; }
  .cell.fill { padding: 0 1px 0 3px; }
  .go span { background: #0f0; }
  .stop span { background: #f00; }
  .cell.key { flex: 0 0 34px; padding: 2px 0 0 4px; line-height: 24px; }
  .key button { display: block; width: 26px; height: 26px; background: #e1e1e1; border: 1px solid #adadad; }
</style>
